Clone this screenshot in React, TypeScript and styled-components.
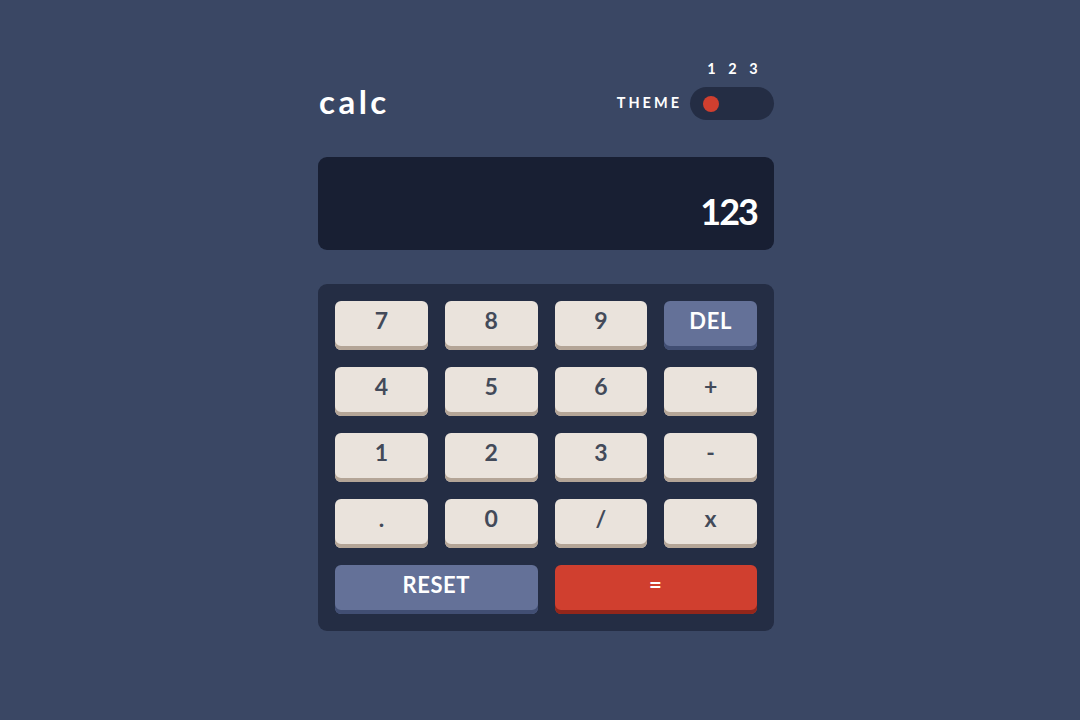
import React from "react";
import styled, { createGlobalStyle } from "styled-components";

const GlobalStyle = createGlobalStyle`
  html, body {
    margin: 0;
    padding: 0;
    background: #3a4764;
    font-family: "Lato", "Open Sans", "Liberation Sans", sans-serif;
  }
  * { box-sizing: border-box; }
`;

const Page = styled.div`
  min-height: 720px;
  display: flex;
  justify-content: center;
  padding: 62px 0 0 12px;
`;

const Calculator = styled.div`
  width: 456px;
  display: flex;
  flex-direction: column;
`;

const Header = styled.header`
  display: flex;
  justify-content: space-between;
  align-items: flex-end;
`;

const Logo = styled.h1`
  margin: 0 0 4px 1px;
  font-size: 33px;
  line-height: 30px;
  font-weight: 700;
  color: #ffffff;
  letter-spacing: 3.5px;
`;

const ThemeArea = styled.div`
  display: flex;
  align-items: flex-end;
`;

const ThemeLabel = styled.span`
  font-size: 14.5px;
  line-height: 14px;
  font-weight: 700;
  letter-spacing: 3px;
  color: #ffffff;
  margin: 0 8px 10px 0;
`;

const SwitchColumn = styled.div`
  display: flex;
  flex-direction: column;
  gap: 11px;
`;

const Numbers = styled.div`
  display: grid;
  grid-template-columns: repeat(3, 21px);
  padding-left: 11px;
  font-size: 14.5px;
  line-height: 14px;
  font-weight: 700;
  color: #ffffff;
  text-align: center;
`;

const Toggle = styled.div`
  width: 84px;
  height: 33px;
  border-radius: 17px;
  background: #242d44;
  display: flex;
  align-items: center;
  padding-left: 13px;
`;

const Knob = styled.span`
  width: 16px;
  height: 16px;
  border-radius: 50%;
  background: #d03f2f;
`;

const Screen = styled.div`
  margin-top: 37px;
  height: 93px;
  border-radius: 9px;
  background: #181f33;
  display: flex;
  justify-content: flex-end;
  align-items: flex-end;
  padding: 0 17px 21px;
  color: #ffffff;
  font-size: 36px;
  line-height: 36px;
  font-weight: 700;
  letter-spacing: -2px;
`;

const Keypad = styled.div`
  margin-top: 34px;
  border-radius: 9px;
  background: #242d44;
  padding: 17px;
  display: grid;
  grid-template-columns: repeat(4, 1fr);
  grid-auto-rows: 49px;
  gap: 17px;
`;

type Variant = "num" | "blue" | "red";

const palette: Record<Variant, { bg: string; shadow: string; color: string; size: string }> = {
  num: { bg: "#eae3dc", shadow: "#b4a597", color: "#434a59", size: "23px" },
  blue: { bg: "#647198", shadow: "#414e73", color: "#ffffff", size: "22px" },
  red: { bg: "#d03f2f", shadow: "#93261a", color: "#ffffff", size: "22px" },
};

const Key = styled.button<{ $variant: Variant; $span?: number }>`
  grid-column: span ${(p) => p.$span ?? 1};
  border: none;
  border-radius: 6px;
  background: ${(p) => palette[p.$variant].bg};
  box-shadow: inset 0 -4px 0 ${(p) => palette[p.$variant].shadow};
  color: ${(p) => palette[p.$variant].color};
  font-family: inherit;
  font-weight: 700;
  font-size: ${(p) => palette[p.$variant].size};
  letter-spacing: ${(p) => (p.$variant === "num" ? "0" : "0.6px")};
  display: flex;
  align-items: center;
  justify-content: center;
  padding: 0 0 11px;
  cursor: pointer;
`;

const keys: { label: string; variant: Variant; span?: number }[] = [
  { label: "7", variant: "num" },
  { label: "8", variant: "num" },
  { label: "9", variant: "num" },
  { label: "DEL", variant: "blue" },
  { label: "4", variant: "num" },
  { label: "5", variant: "num" },
  { label: "6", variant: "num" },
  { label: "+", variant: "num" },
  { label: "1", variant: "num" },
  { label: "2", variant: "num" },
  { label: "3", variant: "num" },
  { label: "-", variant: "num" },
  { label: ".", variant: "num" },
  { label: "0", variant: "num" },
  { label: "/", variant: "num" },
  { label: "x", variant: "num" },
  { label: "RESET", variant: "blue", span: 2 },
  { label: "=", variant: "red", span: 2 },
];

export default function App() {
  return (
    <>
      <GlobalStyle />
      <Page>
        <Calculator>
          <Header>
            <Logo>calc</Logo>
            <ThemeArea>
              <ThemeLabel>THEME</ThemeLabel>
              <SwitchColumn>
                <Numbers>
                  <span>1</span>
                  <span>2</span>
                  <span>3</span>
                </Numbers>
                <Toggle>
                  <Knob />
                </Toggle>
              </SwitchColumn>
            </ThemeArea>
          </Header>
          <Screen>123</Screen>
          <Keypad>
            {keys.map((k) => (
              <Key key={k.label} $variant={k.variant} $span={k.span}>
                {k.label}
              </Key>
            ))}
          </Keypad>
        </Calculator>
      </Page>
    </>
  );
}
